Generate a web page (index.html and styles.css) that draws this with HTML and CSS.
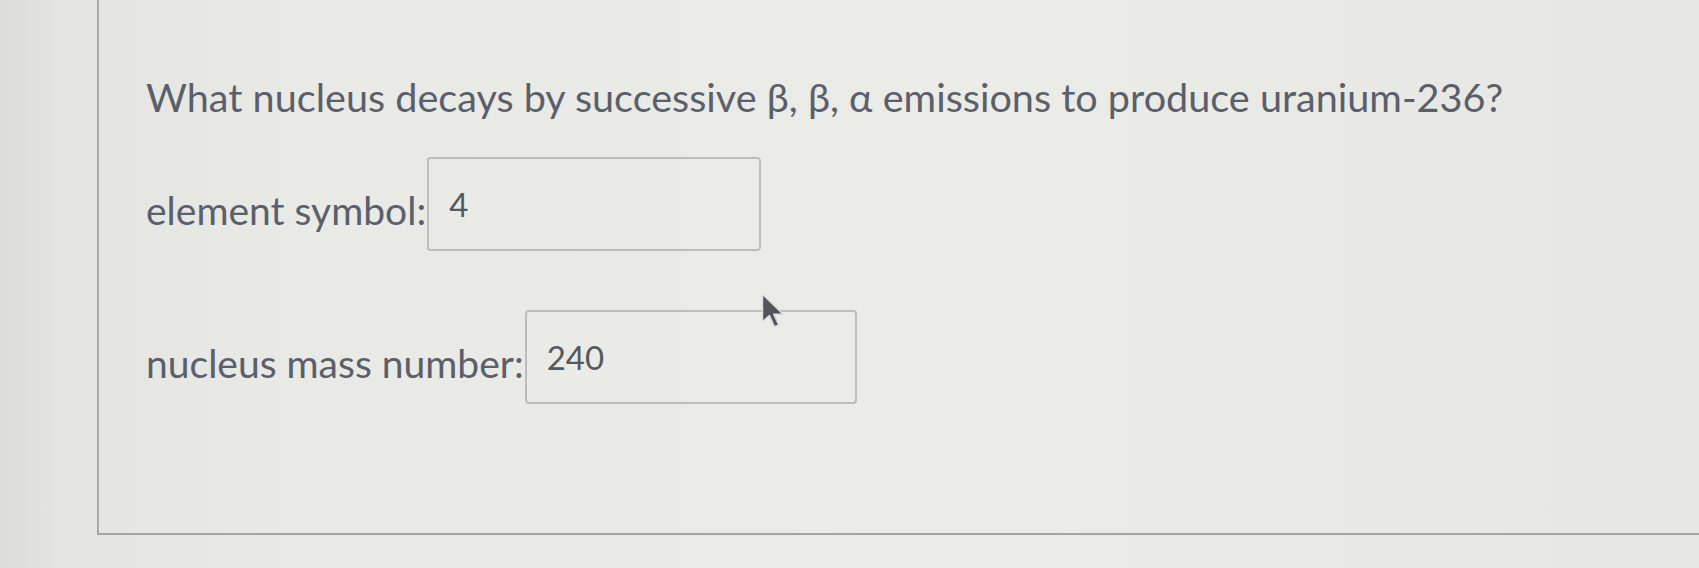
FILE: index.html
```html
<!DOCTYPE html>
<html lang="en">
<head>
  <meta charset="UTF-8">
  <title>Nuclear decay question</title>
  <link rel="stylesheet" href="styles.css">
</head>
<body>
  <div class="page">
    <div class="question">
      <p class="prompt">What nucleus decays by successive β, β, α emissions to produce uranium-236?</p>

      <div class="answer-row row-symbol">
        <span class="answer-label">element symbol:</span>
        <span class="answer-box box-symbol">4</span>
      </div>

      <div class="answer-row row-mass">
        <span class="answer-label">nucleus mass number:</span>
        <span class="answer-box box-mass">240</span>
      </div>
    </div>

    <!-- mouse pointer over the page -->
    <svg class="cursor" width="30" height="42" viewBox="0 0 24 32">
      <path d="M2 1 L2 23 L7.5 18 L11.5 27 L15 25.5 L11 17 L18.5 17 Z" fill="#50545b" stroke="#dcdcd8" stroke-width="1.2" stroke-linejoin="round"/>
    </svg>
  </div>
</body>
</html>
```

FILE: styles.css
```css
* { margin: 0; padding: 0; box-sizing: border-box; }
html, body { height: 100%; }
body {
  font-family: Lato, "Open Sans", sans-serif;
  background: linear-gradient(90deg, #dcdcd8 0px, #e4e4e0 60px, #e9e9e5 300px, #ebebe7 1000px, #e6e6e2 1699px);
  color: #5a5f6b;
  overflow: hidden;
}
.page {
  position: relative;
  height: 568px;
  padding-left: 97px;
}
.question {
  height: 535px;
  border-left: 2px solid #a9aaa8;
  border-bottom: 2px solid #a4a5a3;
  padding-left: 47px;
  padding-top: 72px;
}
.prompt {
  font-size: 39.6px;
  line-height: 50px;
}
.answer-row {
  display: flex;
  align-items: flex-start;
  font-size: 39px;
}
.row-symbol { margin-top: 35px; }
.row-mass { margin-top: 59px; }
.answer-label {
  margin-right: 1px;
  padding-top: 30px;
  line-height: 47px;
}
.answer-box {
  display: inline-block;
  height: 94px;
  border: 2px solid #bdbebb;
  border-radius: 4px;
  padding: 23px 0 0 20px;
  font-size: 33px;
  line-height: 44px;
  color: #54585f;
}
.box-symbol { width: 334px; }
.box-mass { width: 332px; }
.cursor {
  position: absolute;
  left: 760px;
  top: 292px;
}
```
